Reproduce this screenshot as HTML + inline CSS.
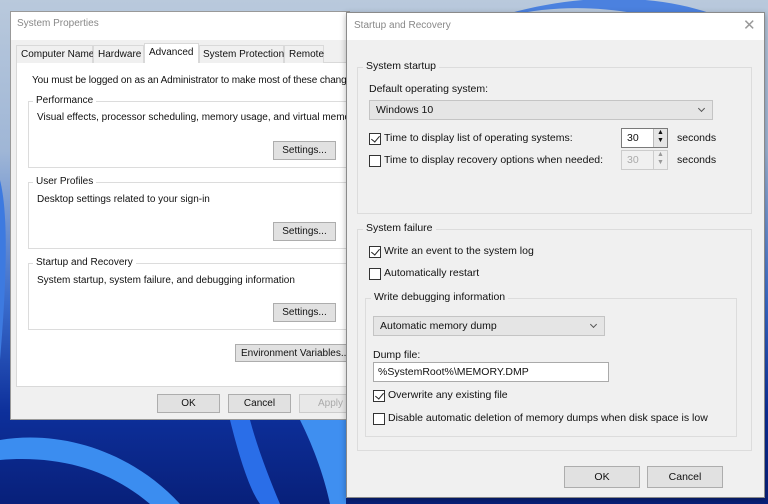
<!DOCTYPE html>
<html><head><meta charset="utf-8"><style>
*{box-sizing:border-box;margin:0;padding:0}
body{width:768px;height:504px;overflow:hidden;position:relative;font-family:"Liberation Sans",sans-serif;font-size:10px;color:#111;background:linear-gradient(180deg,#b9c9dc 0%,#9fb6d6 30%,#3a6ccc 60%,#0d2f9a 82%,#08207a 100%)}
.a{position:absolute;white-space:nowrap}
.btn{position:absolute;background:#e1e1e1;border:1px solid #adadad;text-align:center;color:#111;white-space:nowrap}
.grp{position:absolute;border:1px solid #dcdcdc}
.gt{position:absolute;padding:0 3px;white-space:nowrap}
.cb{position:absolute;width:12px;height:12px;border:1px solid #333;background:#fff}
.cb.c::after{content:"";position:absolute;left:3px;top:0px;width:4px;height:7px;border:solid #222;border-width:0 1.3px 1.3px 0;transform:rotate(40deg)}
.dd{position:absolute;background:#e5e5e5;border:1px solid #c4c4c4;padding-left:6px}
.dd::after{content:"";position:absolute;right:8px;top:5px;width:4px;height:4px;border:solid #555;border-width:0 1px 1px 0;transform:rotate(45deg)}
.r{font-size:10.5px}
</style></head><body>
<svg class="a" style="left:0;top:0" width="768" height="504" viewBox="0 0 768 504">
<path d="M440 40 C520 0 620 -5 720 40 L760 40 C700 -10 560 -20 440 40Z" fill="#2f6fe0" opacity=".8"/>
<path d="M0 180 C10 220 5 300 0 360Z" fill="#3d7ae0"/>
<path d="M0 440 C60 430 130 450 180 504 L150 504 C110 470 60 455 0 460Z" fill="#3b8df0"/>
<path d="M230 420 C240 460 250 490 260 504 L280 504 C270 480 258 450 250 420Z" fill="#2a6ee8"/>
<path d="M300 420 C315 450 325 480 330 504 L346 504 L346 420Z" fill="#3f8ff0"/>
</svg>

<!-- Left window -->
<div class="a" style="left:10px;top:11px;width:340px;height:409px;background:#f0f0f0;border:1px solid #999"></div>
<div class="a" style="left:11px;top:12px;width:338px;height:28px;background:#fff"></div>
<div class="a" style="left:17px;top:18px;color:#888">System Properties</div>
<div class="a" style="left:16px;top:62px;width:334px;height:325px;background:#fff;border:1px solid #d9d9d9"></div>
<div class="a" style="left:16px;top:45px;width:77px;height:18px;border:1px solid #d9d9d9;border-bottom:none;background:#f0f0f0;padding:3px 0 0 4px">Computer Name</div>
<div class="a" style="left:93px;top:45px;width:51px;height:18px;border:1px solid #d9d9d9;border-bottom:none;background:#f0f0f0;padding:3px 0 0 4px">Hardware</div>
<div class="a" style="left:144px;top:43px;width:55px;height:20px;border:1px solid #d9d9d9;border-bottom:none;background:#fff;padding:3px 0 0 4px">Advanced</div>
<div class="a" style="left:199px;top:45px;width:85px;height:18px;border:1px solid #d9d9d9;border-bottom:none;background:#f0f0f0;padding:3px 0 0 3px">System Protection</div>
<div class="a" style="left:284px;top:45px;width:40px;height:18px;border:1px solid #d9d9d9;border-bottom:none;background:#f0f0f0;padding:3px 0 0 4px">Remote</div>
<div class="a" style="left:32px;top:75px;letter-spacing:-0.1px">You must be logged on as an Administrator to make most of these changes.</div>

<div class="grp" style="left:28px;top:101px;width:330px;height:67px"></div>
<div class="gt" style="left:33px;top:95px;background:#fff">Performance</div>
<div class="a" style="left:37px;top:112px">Visual effects, processor scheduling, memory usage, and virtual memory</div>
<div class="btn" style="left:273px;top:141px;width:63px;height:19px;padding-top:3px">Settings...</div>

<div class="grp" style="left:28px;top:182px;width:330px;height:67px"></div>
<div class="gt" style="left:33px;top:176px;background:#fff">User Profiles</div>
<div class="a" style="left:37px;top:194px">Desktop settings related to your sign-in</div>
<div class="btn" style="left:273px;top:222px;width:63px;height:19px;padding-top:3px">Settings...</div>

<div class="grp" style="left:28px;top:263px;width:330px;height:67px"></div>
<div class="gt" style="left:33px;top:257px;background:#fff">Startup and Recovery</div>
<div class="a" style="left:37px;top:275px">System startup, system failure, and debugging information</div>
<div class="btn" style="left:273px;top:303px;width:63px;height:19px;padding-top:3px">Settings...</div>

<div class="btn" style="left:235px;top:344px;width:115px;height:18px;padding-top:3px;text-align:left;padding-left:5px">Environment Variables...</div>
<div class="btn" style="left:157px;top:394px;width:63px;height:19px;padding-top:3px">OK</div>
<div class="btn" style="left:228px;top:394px;width:63px;height:19px;padding-top:3px">Cancel</div>
<div class="btn" style="left:299px;top:394px;width:63px;height:19px;padding-top:3px;color:#aaa;border-color:#ccc;background:#e8e8e8">Apply</div>

<!-- Right window -->
<div class="a" style="left:346px;top:12px;width:419px;height:486px;background:#f0f0f0;border:1px solid #8a8a8a;box-shadow:0 2px 6px rgba(0,0,0,.3)"></div>
<div class="a" style="left:347px;top:13px;width:417px;height:27px;background:#fff"></div>
<div class="a" style="left:354px;top:20px;color:#888">Startup and Recovery</div>
<div class="a" style="left:743px;top:16px;color:#999;font-size:15px">✕</div>

<div class="grp" style="left:357px;top:67px;width:395px;height:147px"></div>
<div class="gt r" style="left:363px;top:60px;background:#f0f0f0">System startup</div>
<div class="a r" style="left:369px;top:83px">Default operating system:</div>
<div class="dd r" style="left:369px;top:100px;width:344px;height:20px;padding-top:3px">Windows 10</div>
<div class="cb c" style="left:369px;top:133px"></div>
<div class="a r" style="left:384px;top:132px">Time to display list of operating systems:</div>
<div class="a r" style="left:621px;top:128px;width:47px;height:20px;background:#fff;border:1px solid #7a7a7a;padding:3px 0 0 5px">30</div>
<div class="a" style="left:653px;top:129px;width:14px;height:18px;background:#e5e5e5;border-left:1px solid #bbb;font-size:7px;line-height:8px;text-align:center">▲<br>▼</div>
<div class="a r" style="left:677px;top:132px">seconds</div>
<div class="cb" style="left:369px;top:155px"></div>
<div class="a r" style="left:384px;top:154px">Time to display recovery options when needed:</div>
<div class="a r" style="left:621px;top:150px;width:47px;height:20px;background:#f0f0f0;border:1px solid #ccc;padding:3px 0 0 5px;color:#aaa">30</div>
<div class="a" style="left:653px;top:151px;width:14px;height:18px;background:#eee;border-left:1px solid #ccc;font-size:7px;line-height:8px;text-align:center;color:#999">▲<br>▼</div>
<div class="a r" style="left:677px;top:154px">seconds</div>

<div class="grp" style="left:357px;top:229px;width:395px;height:222px"></div>
<div class="gt r" style="left:363px;top:222px;background:#f0f0f0">System failure</div>
<div class="cb c" style="left:369px;top:246px"></div>
<div class="a r" style="left:384px;top:245px">Write an event to the system log</div>
<div class="cb" style="left:369px;top:268px"></div>
<div class="a r" style="left:384px;top:267px">Automatically restart</div>
<div class="grp" style="left:365px;top:298px;width:372px;height:139px"></div>
<div class="gt r" style="left:371px;top:291px;background:#f0f0f0">Write debugging information</div>
<div class="dd r" style="left:373px;top:316px;width:232px;height:20px;padding-top:3px">Automatic memory dump</div>
<div class="a r" style="left:373px;top:349px">Dump file:</div>
<div class="a r" style="left:373px;top:362px;width:236px;height:20px;background:#fff;border:1px solid #aaa;padding:3px 0 0 4px">%SystemRoot%\MEMORY.DMP</div>
<div class="cb c" style="left:373px;top:390px"></div>
<div class="a r" style="left:388px;top:389px">Overwrite any existing file</div>
<div class="cb" style="left:373px;top:413px"></div>
<div class="a r" style="left:388px;top:412px">Disable automatic deletion of memory dumps when disk space is low</div>

<div class="btn r" style="left:564px;top:466px;width:76px;height:22px;padding-top:4px">OK</div>
<div class="btn r" style="left:647px;top:466px;width:76px;height:22px;padding-top:4px">Cancel</div>
</body></html>
